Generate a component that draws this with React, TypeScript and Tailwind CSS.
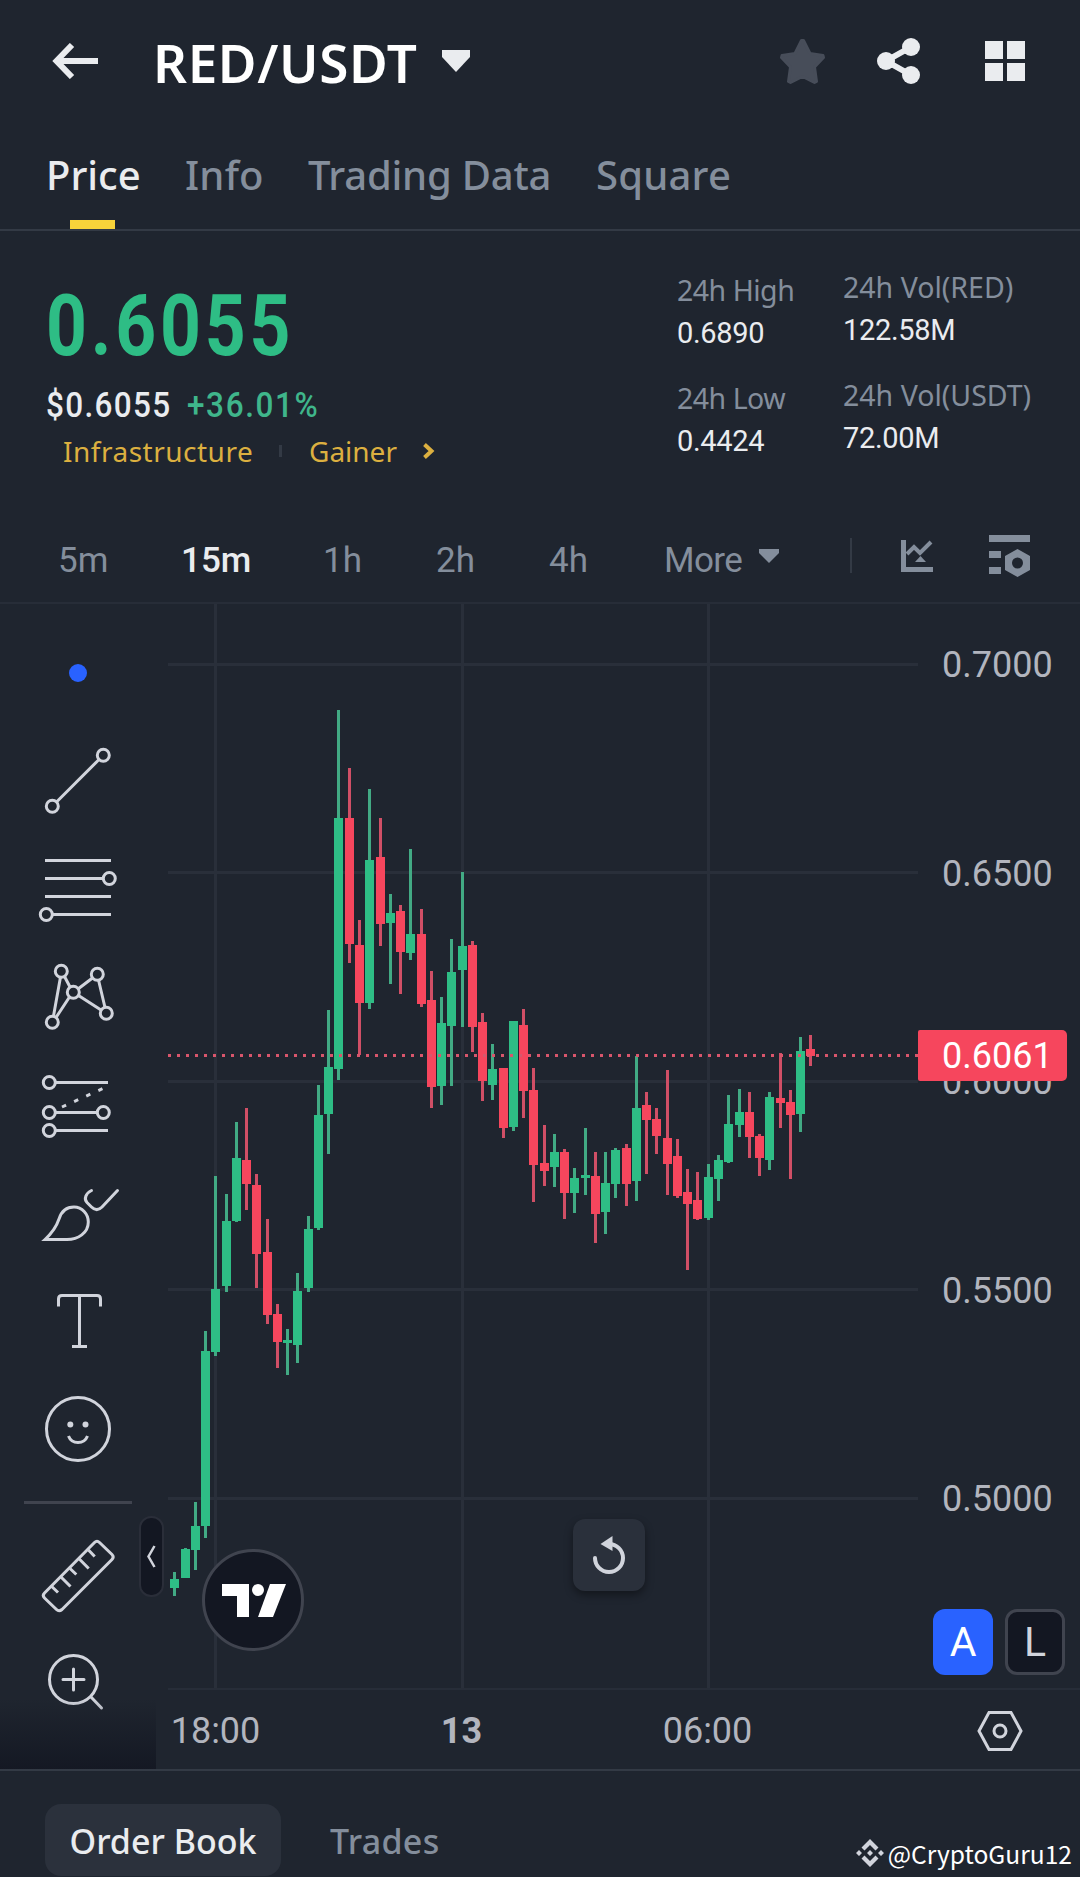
import type { ReactNode } from "react";

const tabs = [
  { label: "Price", width: "w-[93px]", tracking: "tracking-[0px]" },
  { label: "Info", width: "w-[77px]", tracking: "tracking-[0.2px]" },
  { label: "Trading Data", width: "w-[242px]", tracking: "tracking-[-0.2px]" },
  { label: "Square", width: "w-[136px]", tracking: "tracking-[0.2px]" },
];

const stats = [
  [
    { label: "24h High", value: "0.6890" },
    { label: "24h Low", value: "0.4424" },
  ],
  [
    { label: "24h Vol(RED)", value: "122.58M" },
    { label: "24h Vol(USDT)", value: "72.00M" },
  ],
];

const priceLevels = ["0.7000", "0.6500", "0.6000", "0.5500", "0.5000"];

// [direction, high, body top, body bottom, low]
type Candle = ["u" | "d", number, number, number, number];

const candles: Candle[] = [
  ["u", 1572, 1579, 1588, 1596],
  ["u", 1548, 1549, 1578, 1578],
  ["u", 1502, 1526, 1550, 1570],
  ["u", 1331, 1351, 1526, 1538],
  ["u", 1176, 1289, 1352, 1356],
  ["u", 1194, 1221, 1286, 1292],
  ["u", 1122, 1158, 1221, 1222],
  ["d", 1108, 1160, 1184, 1210],
  ["d", 1174, 1185, 1254, 1288],
  ["d", 1219, 1252, 1315, 1324],
  ["d", 1304, 1314, 1342, 1368],
  ["u", 1329, 1340, 1343, 1375],
  ["u", 1273, 1291, 1345, 1363],
  ["u", 1216, 1229, 1288, 1292],
  ["u", 1085, 1115, 1228, 1230],
  ["u", 1010, 1067, 1114, 1154],
  ["u", 710, 818, 1069, 1080],
  ["d", 768, 818, 944, 963],
  ["d", 920, 945, 1003, 1055],
  ["u", 789, 860, 1003, 1009],
  ["d", 818, 857, 924, 946],
  ["u", 894, 913, 923, 984],
  ["d", 905, 911, 952, 994],
  ["u", 849, 934, 953, 960],
  ["d", 909, 934, 1004, 1007],
  ["d", 971, 1000, 1087, 1108],
  ["u", 997, 1023, 1086, 1105],
  ["u", 939, 972, 1026, 1086],
  ["u", 872, 946, 970, 1027],
  ["d", 941, 945, 1027, 1052],
  ["d", 1013, 1022, 1081, 1101],
  ["u", 1044, 1069, 1085, 1100],
  ["d", 1068, 1068, 1128, 1138],
  ["u", 1021, 1021, 1127, 1131],
  ["d", 1009, 1025, 1091, 1118],
  ["d", 1068, 1090, 1165, 1202],
  ["d", 1125, 1163, 1171, 1186],
  ["u", 1134, 1152, 1167, 1187],
  ["d", 1149, 1152, 1193, 1219],
  ["u", 1168, 1178, 1193, 1213],
  ["u", 1128, 1175, 1178, 1195],
  ["d", 1152, 1176, 1214, 1243],
  ["u", 1152, 1183, 1212, 1234],
  ["u", 1148, 1150, 1184, 1198],
  ["d", 1144, 1148, 1184, 1206],
  ["u", 1056, 1108, 1181, 1201],
  ["d", 1092, 1105, 1120, 1174],
  ["d", 1108, 1119, 1136, 1154],
  ["d", 1070, 1138, 1164, 1195],
  ["d", 1139, 1156, 1196, 1198],
  ["d", 1169, 1192, 1204, 1270],
  ["d", 1172, 1200, 1219, 1220],
  ["u", 1164, 1177, 1218, 1220],
  ["u", 1155, 1160, 1179, 1201],
  ["u", 1095, 1124, 1162, 1163],
  ["u", 1089, 1112, 1125, 1137],
  ["d", 1092, 1112, 1137, 1158],
  ["d", 1134, 1136, 1158, 1176],
  ["u", 1092, 1097, 1160, 1170],
  ["d", 1053, 1098, 1103, 1128],
  ["d", 1090, 1102, 1115, 1179],
  ["u", 1037, 1051, 1114, 1132],
  ["d", 1035, 1049, 1056, 1066],
];

function Tool({ children }: { children: ReactNode }) {
  return (
    <svg
      className="block h-[108px] w-[84px] shrink-0 overflow-visible"
      viewBox="0 0 84 108"
      fill="none"
      stroke="#d1d4dc"
      strokeWidth="3"
    >
      {children}
    </svg>
  );
}

function Header() {
  return (
    <header className="flex h-[124px] shrink-0 items-center pb-[2px] pl-[52px] pr-[55px]">
      <svg className="h-9 w-[46px]" viewBox="0 0 46 36" fill="none" stroke="#eaecef" strokeWidth="6">
        <path d="M46 18H5M20 2L4.500 18L20 34" />
      </svg>
      <h1 className="ml-[55px] w-[268px] whitespace-nowrap pt-[2px] font-['Noto_Sans'] text-[53px] font-semibold leading-none tracking-[0.6px] text-white">
        RED/USDT
      </h1>
      <svg className="ml-[21px] h-[22px] w-7" viewBox="0 0 28 22" fill="#eaecef">
        <path d="M0 0H28V7L14 22L0 7Z" />
      </svg>
      <div className="ml-auto flex items-center">
        <svg className="h-[46px] w-[45px]" viewBox="0 0 45 46" fill="#474d59" stroke="#474d59" strokeWidth="3" strokeLinejoin="round">
          <path d="M21.500 2.500H23.500L30 15.500L43 17.500L43.500 19.500L34.500 29L36.500 43.500L34.500 44.500L22.500 38.500L10.500 44.500L8.500 43.500L10.500 29L1.500 19.500L2 17.500L15 15.500Z" />
        </svg>
        <svg className="ml-[52px] h-12 w-[43px]" viewBox="0 0 43 48" fill="#eaecef">
          <circle cx="9" cy="24" r="9" />
          <circle cx="34" cy="10" r="9" />
          <circle cx="34" cy="38" r="9" />
          <path d="M34 10L9 24L34 38" fill="none" stroke="#eaecef" strokeWidth="6" />
        </svg>
        <div className="ml-[65px] grid h-10 w-10 grid-cols-2 gap-1">
          <span className="bg-[#eaecef]" />
          <span className="bg-[#eaecef]" />
          <span className="bg-[#eaecef]" />
          <span className="bg-[#eaecef]" />
        </div>
      </div>
    </header>
  );
}

function PriceTabs() {
  return (
    <nav className="flex h-[107px] shrink-0 items-end gap-[46px] border-b-2 border-[#333a45] pl-[46px] font-['Noto_Sans'] text-[40px] font-medium">
      {tabs.map((tab, i) => (
        <div
          key={tab.label}
          className={`flex h-full flex-col justify-end whitespace-nowrap ${tab.width} ${tab.tracking} ${
            i === 0 ? "text-[#eaecef]" : "text-[#848e9c]"
          }`}
        >
          <span className="mb-[19px] leading-[52px]">{tab.label}</span>
          <span className={`h-[9px] w-[45px] self-center ${i === 0 ? "bg-[#f8d33a]" : ""}`} />
        </div>
      ))}
    </nav>
  );
}

function Ticker() {
  return (
    <section className="flex h-[269px] shrink-0">
      <div className="w-[677px] pl-[46px] pt-[49px]">
        <div className="h-[92px] origin-left scale-x-[0.84] font-[Roboto] text-[85px] font-bold leading-[92px] tracking-[4.5px] text-[#2ebd85]">
          0.6055
        </div>
        <div className="mt-[11px] flex h-11 items-center font-[Roboto] text-[35px] font-medium leading-none">
          <span className="w-[141px] origin-left scale-x-90 tracking-[1.5px] text-[#eaecef]">$0.6055</span>
          <span className="origin-left scale-x-90 tracking-[1.8px] text-[#3fb68b]">+36.01%</span>
        </div>
        <div className="mt-[6px] flex items-center pl-[17px] font-['Noto_Sans'] text-[28px] leading-[36px] text-[#dcb040]">
          <span className="w-[190px] whitespace-nowrap tracking-[0.5px]">Infrastructure</span>
          <span className="ml-[26px] h-3 w-[3px] bg-[#333a45]" />
          <span className="ml-[27px] w-[91px]">Gainer</span>
          <svg className="ml-[23px] h-4 w-3" viewBox="0 0 12 16" fill="none" stroke="#dcb040" strokeWidth="4">
            <path d="M1.500 1.500L8.500 8L1.500 14.500" />
          </svg>
        </div>
      </div>
      {stats.map((col, i) => (
        <div
          key={i}
          className={`flex flex-col gap-[26px] ${
            i === 0 ? "w-[166px] pt-[39px] tracking-[-0.5px]" : "pt-[36px] tracking-[0px]"
          }`}
        >
          {col.map((s) => (
            <div key={s.label} className="h-[82px] whitespace-nowrap">
              <div className="font-['Noto_Sans'] text-[28.500px] leading-[40px] text-[#848e9c]">{s.label}</div>
              <div className="pt-px font-[Roboto] text-[29px] leading-[44px] tracking-[-0.3px] text-[#eaecef]">{s.value}</div>
            </div>
          ))}
        </div>
      ))}
    </section>
  );
}

function Intervals() {
  return (
    <div className="flex h-[104px] shrink-0 items-center border-b-2 border-[#272d38] pl-[58px] pt-[9px] font-[Roboto] text-[35px] leading-none text-[#848e9c]">
      <div className="flex items-center pt-[9px]">
        <span className="w-[123px]">5m</span>
        <span className="w-[142px] font-medium text-[#eaecef]">15m</span>
        <span className="w-[113px]">1h</span>
        <span className="w-[113px]">2h</span>
        <span className="w-[115px]">4h</span>
        <span className="w-[95px] tracking-[-0.6px]">More</span>
        <svg className="mb-2 h-[14px] w-5" viewBox="0 0 20 14" fill="#848e9c">
          <path d="M0 0H20V4L10 14L0 4Z" />
        </svg>
      </div>
      <span className="ml-[71px] h-[35px] w-[2px] bg-[#333a45]" />
      <svg className="ml-[49px] h-8 w-8" viewBox="0 0 32 32" fill="none" stroke="#848e9c" strokeWidth="5">
        <path d="M2.500 0V29.500H32" />
        <path d="M6 14L13 7L19 13L30 2" strokeWidth="4" />
        <path d="M14 22L19.500 16L25 22Z" fill="#848e9c" stroke="none" />
      </svg>
      <svg className="ml-[56px] h-[42px] w-[41px]" viewBox="0 0 41 42" fill="#848e9c">
        <path d="M0 0H41V7H0ZM0 16H12V23H0ZM0 32H12V39H0Z" />
        <path fillRule="evenodd" d="M28.500 14L41 21V35L28.500 42L16 35V21ZM28.500 22.500A5.500 5.500 0 1 0 28.500 33.500A5.500 5.500 0 1 0 28.500 22.500Z" />
      </svg>
    </div>
  );
}

function DrawingTools() {
  return (
    <aside className="relative flex w-[156px] shrink-0 flex-col items-center overflow-hidden pt-[15px]">
      <Tool>
        <circle cx="42" cy="54" r="9" fill="#2962ff" stroke="none" />
      </Tool>
      <Tool>
        <path d="M20.500 75L63 32.500" />
        <circle cx="16.300" cy="79.300" r="6" />
        <circle cx="67.300" cy="28.300" r="6" />
      </Tool>
      <Tool>
        <path d="M9 25.500H75M9 43.500H67M9 61.500H75M17 79.500H75" />
        <circle cx="73.300" cy="43.500" r="6" />
        <circle cx="10.300" cy="79.500" r="6" />
      </Tool>
      <Tool>
        <path d="M24.500 34L17.500 73M28.500 33.500L34 44M42 46L56.500 35M42.500 52.500L65 67M33.500 54L20 74.500M62.500 37L69 64.500" />
        <circle cx="25.300" cy="28.300" r="6" />
        <circle cx="61.300" cy="31.300" r="6" />
        <circle cx="37.300" cy="49.300" r="6" />
        <circle cx="70.300" cy="70.300" r="6" />
        <circle cx="16.300" cy="79.300" r="6" />
      </Tool>
      <Tool>
        <path d="M19 31.500H72M19 61.500H61M19 79.500H72" />
        <path d="M26 56L68 37" strokeDasharray="4.500 8.800" />
        <circle cx="13.300" cy="31.500" r="6" />
        <circle cx="13.300" cy="61.500" r="6" />
        <circle cx="67.300" cy="61.500" r="6" />
        <circle cx="13.300" cy="79.500" r="6" />
      </Tool>
      <Tool>
        <path d="M9 80.500C16 74 21 66 23 60C25.500 52 31 48 38 48C46 48 52.300 55 52.300 63C52.300 74 42 80.500 31 80.500Z" />
        <path d="M55.500 31.500C50 34 47.500 40 51 43.500L55.500 48C59 51.500 62.500 51.500 66 48L81.500 31.500" strokeLinecap="round" />
      </Tool>
      <Tool>
        <path d="M22.500 39.500V32Q22.500 28.500 26 28.500H61Q64.500 28.500 64.500 32V39.500M43.500 28.500V79.500M36 79.500H51" />
      </Tool>
      <Tool>
        <circle cx="42" cy="54" r="31.500" />
        <circle cx="34.300" cy="49.500" r="3" fill="#d1d4dc" stroke="none" />
        <circle cx="49.500" cy="49.500" r="3" fill="#d1d4dc" stroke="none" />
        <path d="M32.500 61Q35 67.500 42 67.500Q49 67.500 51.500 61" />
      </Tool>
      <div className="my-[18px] h-[3px] w-[108px] shrink-0 bg-[#40444f]" />
      <Tool>
        <path strokeLinejoin="round" d="M8.500 71L58.500 20.500Q61 18 63.500 20.500L76 32.500Q78.500 35 76 37.500L26 87.500Q23 90 20.500 87.500L8.500 76Q6 73.500 8.500 71Z" />
        <path d="M15.700 64.500L22 70.500M25 55L34.500 64.500M34 46.500L40.300 52.500M43.300 37L52.700 46.500M52.500 28L58.700 34.500" />
      </Tool>
      <Tool>
        <circle cx="37.500" cy="49.500" r="24" />
        <path d="M27 49.500H48M37.500 39V60M55 67L65.500 78" strokeLinecap="round" />
      </Tool>
      <div className="absolute bottom-0 left-0 h-[70px] w-full bg-gradient-to-b from-[#131722]/0 to-[#131722]/90" />
    </aside>
  );
}

function Plot() {
  return (
    <div className="relative h-[1084px] w-[762px] shrink-0">
      <svg className="block h-full w-full" viewBox="156 604 762 1084">
        <path
          d="M168 664.500H918M168 872.500H918M168 1081.500H918M168 1289.500H918M168 1498.500H918M215.500 602V1688M462.500 602V1688M708.500 602V1688"
          stroke="#292f3a"
          strokeWidth="3"
        />
        {candles.map(([dir, high, top, bottom, low], i) => {
          const x = Math.round(170.37 + i * 10.257);
          return (
            <g key={i}>
              <rect x={x + 3} y={high} width="3" height={low - high} fill={dir === "u" ? "#42aa84" : "#d04f66"} />
              <rect x={x} y={top} width="9" height={bottom - top} fill={dir === "u" ? "#2ebd85" : "#f6465d"} />
            </g>
          );
        })}
        <path d="M168 1055.500H918" stroke="#d9566c" strokeWidth="3" strokeDasharray="3 6" />
      </svg>

      <button className="absolute -left-[17px] top-[912px] flex h-[81px] w-[25px] items-center justify-center rounded-xl border-2 border-[#2a2e39] bg-[#131722]">
        <svg className="h-[23px] w-[9px]" viewBox="0 0 9 23" fill="none" stroke="#d1d4dc" strokeWidth="2.500">
          <path d="M7.500 1L1.500 11.500L7.500 22" />
        </svg>
      </button>

      <div className="absolute left-[46px] top-[945px] flex h-[102px] w-[102px] items-center justify-center rounded-full border-[3px] border-[#40444f] bg-[#131722] pl-px">
        <svg className="h-[33px] w-[64px]" viewBox="0 0 64 33" fill="#ffffff">
          <path d="M0 0H27V33H15V12H0Z" />
          <circle cx="36" cy="6" r="6" />
          <path d="M48 0H64L51 33H36Z" />
        </svg>
      </div>

      <button className="absolute left-[417px] top-[915px] flex h-[72px] w-[72px] items-center justify-center rounded-xl bg-[#2a303b] shadow-[0_4px_8px_rgba(0,0,0,0.4)]">
        <svg className="h-[38px] w-[32px]" viewBox="0 0 32 38" fill="none" stroke="#d1d4dc" strokeWidth="4">
          <path d="M2 22A14 14 0 1 0 16 8" strokeLinecap="round" />
          <path d="M19.500 0V15L7.500 8Z" fill="#d1d4dc" stroke="none" />
        </svg>
      </button>
    </div>
  );
}

function PriceAxis() {
  return (
    <div className="relative flex flex-1 flex-col gap-[168.600px] pl-[24px] pt-[41px] text-[36px] leading-[40px] text-[#b2b5be]">
      {priceLevels.map((level) => (
        <span key={level}>{level}</span>
      ))}
      <div className="absolute left-0 top-[426px] h-[51px] w-[149px] rounded-r-[5px] rounded-l-[2px] bg-[#f6465d] pl-[24px] leading-[53px] text-white">
        0.6061
      </div>
      <div className="absolute left-[15px] top-[1005px] flex gap-3 text-[41px]">
        <span className="flex h-[66px] w-[60px] items-center justify-center rounded-xl bg-[#2962ff] text-white">A</span>
        <span className="flex h-[66px] w-[60px] items-center justify-center rounded-xl border-[3px] border-[#40444f] bg-[#131722] text-[#d1d4dc]">
          L
        </span>
      </div>
    </div>
  );
}

function Chart() {
  return (
    <section className="flex h-[1167px] shrink-0 border-b-2 border-[#333a45] font-[Roboto]">
      <DrawingTools />
      <div className="flex flex-1 flex-col">
        <div className="flex h-[1084px]">
          <Plot />
          <PriceAxis />
        </div>
        <div className="ml-3 flex h-[81px] items-center border-t-2 border-[#272d38] pt-[3px] text-[36px] leading-none text-[#b2b5be]">
          <span className="w-[95px] text-center">18:00</span>
          <span className="ml-[151px] w-[95px] text-center font-bold">13</span>
          <span className="ml-[151px] w-[95px] text-center">06:00</span>
          <svg className="ml-auto mr-[57px] h-10 w-[46px]" viewBox="0 0 46 40" fill="none" stroke="#d1d4dc" strokeWidth="3">
            <path d="M12 1.500H34L44 20L34 38.500H12L2 20Z" />
            <circle cx="23" cy="20" r="6" />
          </svg>
        </div>
      </div>
    </section>
  );
}

function BottomBar() {
  return (
    <footer className="flex flex-1 items-start pl-[45px] pr-[8px] font-['Noto_Sans'] text-[34px] font-medium leading-none">
      <span className="mt-[33px] flex h-[72px] w-[236px] items-center justify-center whitespace-nowrap rounded-2xl bg-[#2b313c] pt-[2px] text-[#eaecef]">
        Order Book
      </span>
      <span className="ml-[49px] mt-[33px] flex h-[72px] items-center pt-[2px] tracking-[0.3px] text-[#848e9c]">Trades</span>
      <div className="ml-auto mt-[68px] flex items-center gap-1 font-['Noto_Sans_CJK_SC',sans-serif] text-[24.600px] font-normal text-white">
        <svg className="h-7 w-7" viewBox="0 0 28 28" fill="#d1d4dc">
          <path d="M14 0L22.500 8.500L19.500 11.500L14 6L8.500 11.500L5.500 8.500Z" />
          <path d="M14 28L22.500 19.500L19.500 16.500L14 22L8.500 16.500L5.500 19.500Z" />
          <path d="M3 11L6 14L3 17L0 14ZM14 11L17 14L14 17L11 14ZM25 11L28 14L25 17L22 14Z" />
        </svg>
        <span>@CryptoGuru12</span>
      </div>
    </footer>
  );
}

export default function App() {
  return (
    <div className="flex h-[1877px] w-[1080px] flex-col overflow-hidden bg-[#1f252f]">
      <Header />
      <PriceTabs />
      <Ticker />
      <Intervals />
      <Chart />
      <BottomBar />
    </div>
  );
}
